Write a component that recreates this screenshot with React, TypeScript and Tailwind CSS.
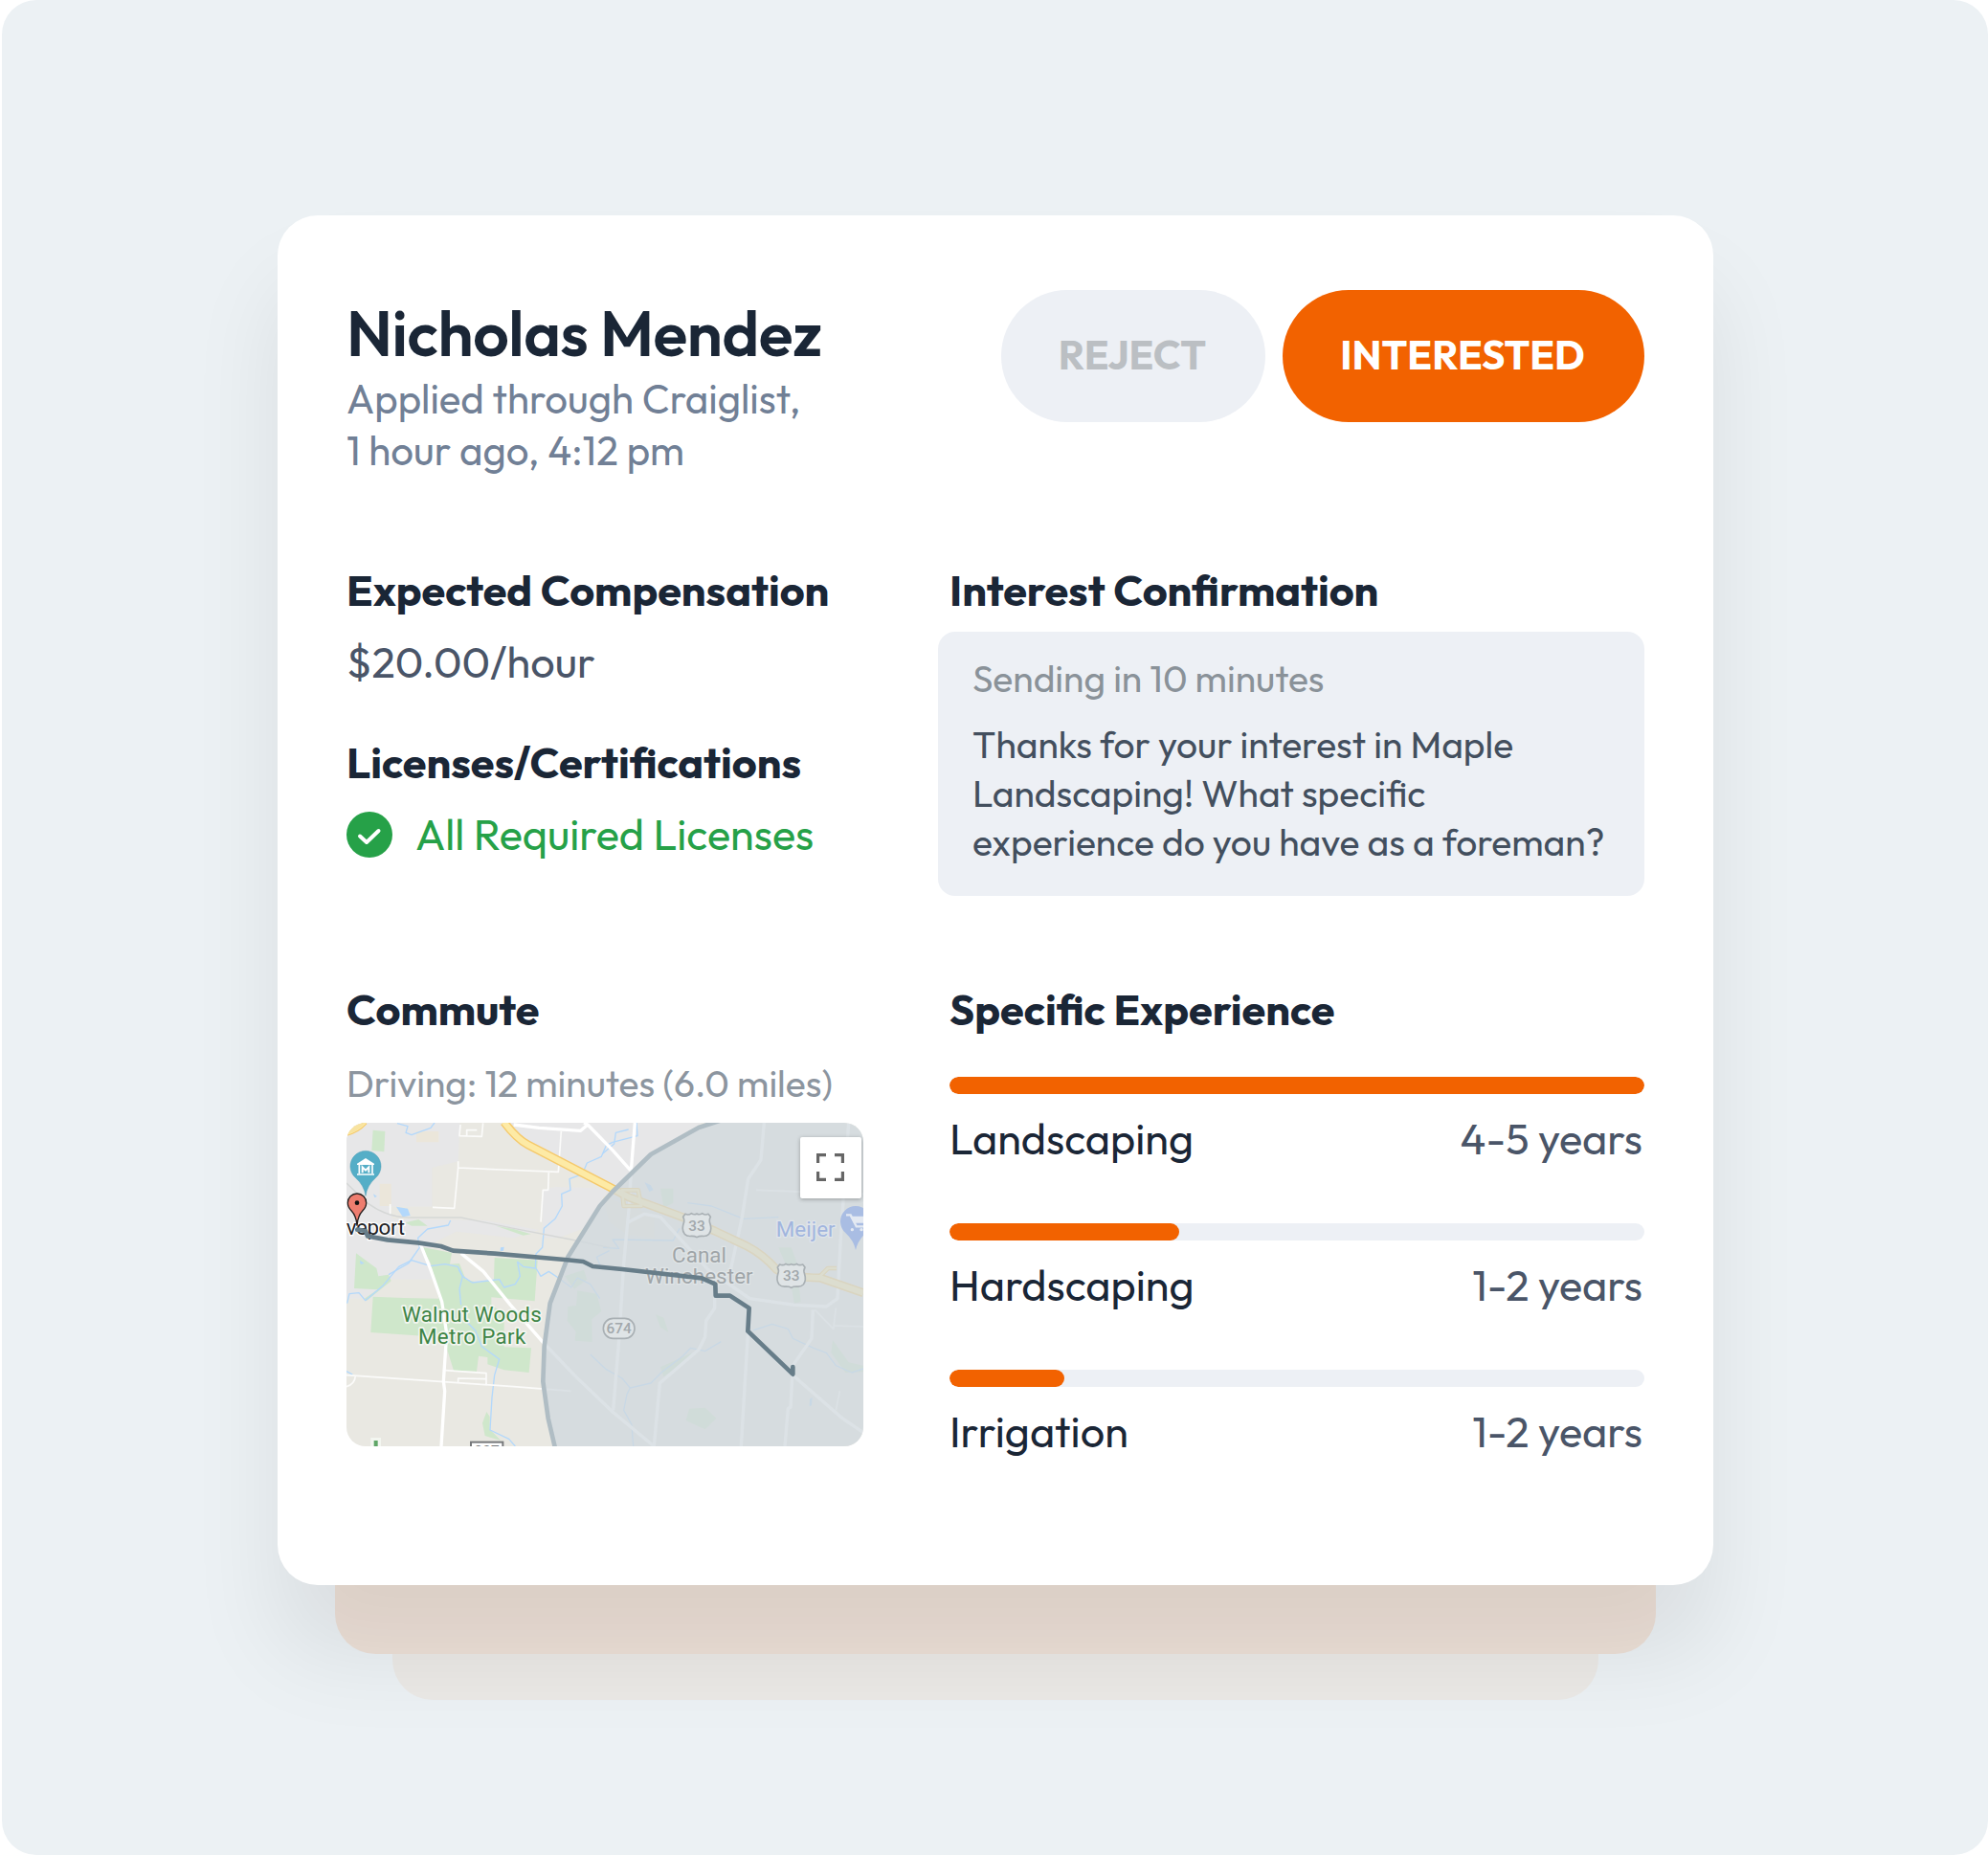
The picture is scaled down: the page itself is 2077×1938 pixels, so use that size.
const experience = [
  { name: 'Landscaping', years: '4-5 years', percent: 100 },
  { name: 'Hardscaping', years: '1-2 years', percent: 33.1 },
  { name: 'Irrigation', years: '1-2 years', percent: 16.5 },
];

function Shield({ x, y }: { x: number; y: number }) {
  return (
    <g transform={`translate(${x} ${y})`}>
      <path
        d="M-36 -37 Q-26 -32 -17 -39 Q-8 -33 0 -38 Q8 -33 17 -39 Q26 -32 36 -37 L43 -28 Q37 -18 42 -6 Q48 14 38 26 Q30 34 16 32 Q6 32 0 36 Q-6 32 -16 32 Q-30 34 -38 26 Q-48 14 -42 -6 Q-37 -18 -43 -28 Z"
        fill="#dfe4e6"
        stroke="#a9b0b4"
        strokeWidth="5"
        strokeLinejoin="round"
      />
      <text x="0" y="15" fontSize="46" fontWeight="500" textAnchor="middle" fill="#a2a8ac">33</text>
    </g>
  );
}

function CommuteMap() {
  return (
    <svg viewBox="36 39 1620 1014" className="block h-[338px] w-[540px] font-['Roboto',sans-serif]">
      <rect x="36" y="39" width="1620" height="1014" fill="#e9e8e2" />

      {/* built-up areas */}
      <g fill="#e7e7e8">
        <path d="M36 39 H392 L386 160 L304 180 V302 H170 L180 340 L470 345 L640 375 L560 400 L380 380 L300 420 L330 530 H170 L120 590 H36 Z" />
        <path d="M530 39 H1150 L990 138 L870 250 L780 210 L700 150 L600 110 Z" />
        <path d="M690 240 L860 245 L780 370 L700 400 H650 V250 Z" />
      </g>
      <path d="M255 66 H325 V100 H255 Z M140 230 H176 V300 H140 Z M840 270 L920 300 L1000 330 V400 L920 390 L860 350 Z" fill="#ebe6da" />

      {/* parks */}
      <g fill="#cfe7cb">
        <path d="M119 62 L157 66 L154 130 L115 126 Z" />
        <path d="M66 448 L130 495 L136 520 L168 515 L176 535 L100 596 L92 590 L134 562 L60 558 Z" />
        <path d="M119 584 L215 588 L325 590 L300 480 L272 428 L366 447 L360 482 L390 480 L410 530 L450 540 L498 530 L500 462 L635 470 L626 598 L490 586 V610 L530 640 V742 L615 745 L608 822 L530 814 L478 796 V774 L450 770 L444 818 L372 816 L350 745 L340 712 L112 696 Z" />
        <path d="M220 352 L262 342 L290 362 L240 362 Z M505 362 L560 372 L614 388 L590 392 Z" />
        <path d="M475 945 L485 960 V1000 L520 1035 L470 1020 L462 980 Z" />
        <path d="M760 565 L820 575 L835 630 L805 655 L806 726 L752 722 L755 694 L728 660 L730 615 L756 612 Z" />
        <path d="M720 520 L780 500 L790 530 L750 560 Z M1020 245 H1060 V290 L1030 305 Z M1390 430 H1430 L1445 470 L1460 600 L1440 605 L1420 500 Z" />
        <path d="M1005 640 L1030 650 L1045 695 L1020 680 Z M1110 935 L1160 932 L1195 965 L1160 1000 L1100 972 Z" />
        <path d="M1020 805 L1120 760 L1100 790 L1030 835 Z M1560 720 L1610 790 L1656 800 V820 L1600 822 L1555 760 Z" />
      </g>

      {/* water */}
      <g fill="none" stroke="#b3d8fb" strokeWidth="4" strokeLinejoin="round">
        <path d="M195 41 L228 50 L222 70 L240 77 L300 55 L312 39" />
        <path d="M870 100 L850 110 L835 145 L790 165 L775 200 L735 215 L738 250 L710 262 L712 300 L690 340 L655 370 L650 430 L630 450 L628 495 L590 490 L572 475 L580 520 L565 545 L530 555 L515 530 L430 540 L400 520 L385 490 L345 482 L300 488 L240 470 L200 490 L150 550 L95 596 L75 572 L45 575 L38 605" />
        <path d="M362 345 L355 360 L290 372 L260 400 L265 430 L230 480 L168 515" />
        <path d="M388 500 L400 520 L390 560 L395 610 M400 650 L440 690 L460 740 L515 780 L500 830 L492 900 L486 1002 L545 1030 L565 1053" />
        <path d="M630 495 L645 520 L670 505 L700 525 L740 555 L760 525 L800 545 L830 590 M860 440 L820 460 L835 495" />
        <path d="M36 818 L55 828 M840 135 L875 105 L880 70 L920 60 M945 39 L948 80 L870 100" />
        <path d="M800 765 L850 812 L900 840 L925 870 L915 890 L905 940 L930 985 L935 1053 M925 870 L990 855 L1025 820 L1090 770 L1115 745 L1160 755 L1210 725" />
        <path d="M1310 690 L1370 670 L1420 685 L1435 715 L1500 745 L1540 760 L1570 800 L1620 822 L1656 810 M1105 290 L1180 300 L1280 340 L1390 335" />
        <path d="M840 430 L890 433 L870 405 L1060 408 L1080 370" />
      </g>
      <path d="M192 302 L228 308 L236 330 L212 334 Z M519 430 L530 428 L528 440 L518 441 Z M120 262 L132 270 L124 273 Z M78 470 L92 480 L80 482 Z M970 225 L990 235 L998 250 L985 255 Z M1488 905 L1496 900 L1494 925 L1487 928 Z" fill="#b3d8fb" />

      {/* railway and minor roads */}
      <path d="M36 228 L100 290 Q170 340 240 336 L395 336 L560 370 L740 405 L860 430" fill="none" stroke="#d5d7d6" strokeWidth="4" />
      <g fill="none" stroke="#fbfbfa" strokeWidth="5" strokeLinejoin="round">
        <path d="M306 304 L374 307 L386 180 L520 186 L700 193 L709 66 M670 194 L668 250 H652 L645 350 M386 180 V160 M173 294 V325" />
        <path d="M393 45 L390 80 L460 82 L464 40 M413 80 V62 H445" />
        <path d="M36 830 L330 850 L560 866 L740 880 M345 815 L474 824 V860 M386 853 V840 L474 842 M36 866 Q62 858 64 832" />
        <path d="M1320 250 L1656 262 M1504 625 L1562 685 L1570 620 M1562 675 L1656 678 M1570 940 L1582 880" />
      </g>

      {/* main roads */}
      <g fill="none" stroke="#ffffff" strokeWidth="10" strokeLinejoin="round">
        <path d="M268 420 L300 500 L335 600 L350 700 L340 850 L344 880 L333 1053" />
        <path d="M395 448 L465 505 L550 610 L650 725 L750 830 L870 945 L1000 1053" />
        <path d="M560 45 L640 55 L770 64 L792 45 L870 125 L926 188 M780 39 L792 45" />
        <path d="M940 39 L928 190 L922 300 L905 480 L890 720 L872 940" />
        <path d="M920 350 L970 325 L1020 335 L1170 500 L1300 590 L1440 610 L1540 615 L1575 590 L1585 400 L1610 39" />
        <path d="M1345 39 L1335 155 L1295 215 L1275 340 L1240 500 L1190 560 V620 L1163 660 L1160 710 L1140 750 L1018 855 L1000 1053" />
        <path d="M1295 690 L1285 850 L1273 1053 M1498 625 L1494 715 L1435 800 L1428 930 L1420 935 L1410 1053 M1435 830 L1590 965 L1656 1010" />
      </g>

      {/* US-33 */}
      <g fill="none" strokeLinejoin="round">
        <path d="M530 37 Q570 90 605 108 L860 240 L920 272 L1090 335 L1190 378 L1290 425 Q1340 450 1385 500 Q1430 525 1520 525 L1656 572" stroke="#f5c96b" strokeWidth="27" />
        <path d="M30 75 Q70 66 95 38 M900 250 H950 L960 300 H905 Z M1520 520 L1545 495 H1572" stroke="#f5c96b" strokeWidth="14" />
        <path d="M530 37 Q570 90 605 108 L860 240 L920 272 L1090 335 L1190 378 L1290 425 Q1340 450 1385 500 Q1430 525 1520 525 L1656 572" stroke="#fdeaa5" strokeWidth="18" />
        <path d="M30 75 Q70 66 95 38 M900 250 H950 L960 300 H905 Z M1520 520 L1545 495 H1572" stroke="#fdeaa5" strokeWidth="8" />
      </g>
      <path d="M36 39 H94 Q75 66 36 76 Z" fill="#f8e3a0" />

      {/* commute radius */}
      <path
        d="M695 1080 L668 965 L652 850 L656 740 L674 605 L730 460 L830 300 L870 255 L990 138 L1140 54 L1220 28 L1700 28 V1080 Z"
        fill="#d0d8dd"
        fillOpacity="0.74"
      />
      <path
        d="M695 1080 L668 965 L652 850 L656 740 L674 605 L730 460 L830 300 L870 255 L990 138 L1140 54 L1220 28"
        fill="none"
        stroke="#b0bdc4"
        strokeWidth="14"
        strokeLinejoin="round"
      />

      {/* labels */}
      <g fontSize="67">
        <g fill="#3d8445" stroke="#f3f6f0" strokeWidth="10" strokeLinejoin="round" paintOrder="stroke">
          <text x="210" y="662" textLength="437">Walnut Woods</text>
          <text x="261" y="731" textLength="337">Metro Park</text>
        </g>
        <text x="35" y="390" textLength="184" fill="#202124" stroke="#ffffff" strokeWidth="8" paintOrder="stroke">veport</text>
        <g fill="#9fa5a8" stroke="#dfe4e6" strokeWidth="8" paintOrder="stroke">
          <text x="1056" y="476" textLength="171">Canal</text>
          <text x="972" y="544" textLength="338">Winchester</text>
        </g>
        <text x="1382" y="396" textLength="186" fill="#a1b5de" stroke="#dfe4ea" strokeWidth="8" paintOrder="stroke">Meijer</text>
      </g>
      <Shield x={1134} y={362} />
      <Shield x={1430} y={520} />
      <rect x="841" y="652" width="98" height="63" rx="31" fill="#dfe4e6" stroke="#a9b0b4" strokeWidth="5" />
      <text x="890" y="700" fontSize="46" fontWeight="500" textAnchor="middle" fill="#a2a8ac">674</text>
      <rect x="426" y="1040" width="100" height="60" fill="#ffffff" stroke="#77797b" strokeWidth="6" />
      <text x="476" y="1082" fontSize="46" fontWeight="500" textAnchor="middle" fill="#77797b">227</text>
      <rect x="112" y="1026" width="32" height="30" fill="#f3f6f0" />
      <rect x="122" y="1035" width="12" height="20" fill="#5fa667" />

      {/* store pin */}
      <path d="M1632 438 Q1626 408 1600 384 A48 48 0 1 1 1664 384 Q1638 408 1632 438 Z" fill="#a9bde3" />
      <g fill="none" stroke="#e3e9f2" strokeWidth="7">
        <path d="M1602 328 H1616 L1634 364 H1656" />
        <path d="M1620 336 H1656 V350 H1628 Z" fill="#e3e9f2" />
      </g>
      <circle cx="1621" cy="374" r="5" fill="#e3e9f2" />
      <circle cx="1650" cy="374" r="5" fill="#e3e9f2" />

      {/* museum pin */}
      <path d="M96 268 Q92 236 64 211 A48 48 0 1 1 128 211 Q100 236 96 268 Z" fill="#55aec7" stroke="#4a9db5" strokeWidth="1.5" />
      <g fill="none" stroke="#ffffff">
        <path d="M69 167 L96 150 L123 167 V171 H69 Z" fill="#ffffff" stroke="none" />
        <path d="M76 170 V199 M117 170 V199" strokeWidth="5" />
        <path d="M69 201 H123" strokeWidth="5" />
        <path d="M86 196 V178 L96 188 L106 178 V196" strokeWidth="6" />
      </g>

      {/* origin pin */}
      <path
        d="M69 362 Q67 330 51 314 Q40 303 40 290 A29 29 0 0 1 98 290 Q98 303 87 314 Q71 330 69 362 Z"
        fill="#ee7d6f"
        stroke="#26201f"
        strokeWidth="4"
      />
      <circle cx="69" cy="290" r="7" fill="#111111" />

      <path
        d="M70 374 L96 378 L102 394 L165 406 L260 415 L332 426 L370 440 L500 449 L720 468 L778 474 L808 489 L900 498 L1150 526 L1192 545 L1193 581 H1238 L1298 620 L1294 692 L1435 827 V804"
        fill="none"
        stroke="#677d89"
        strokeWidth="14"
        strokeLinejoin="round"
        strokeLinecap="round"
      />
    </svg>
  );
}

function SectionTitle({ children }: { children: string }) {
  return <h2 className="text-[45px] leading-[60px] font-bold text-[#1a2636]">{children}</h2>;
}

export default function App() {
  return (
    <div className="h-[1938px] w-[2077px] overflow-hidden bg-white pl-[2px] font-['Outfit','Lato',sans-serif]">
      <div className="h-full rounded-[36px] bg-[#ecf1f4] pt-[225px] pl-72">
        <div className="flex w-[1500px] flex-col items-center">
          <div className="relative z-20 h-[1431px] w-full rounded-[42px] bg-white px-[72px] pt-[78px] shadow-[0_72px_96px_rgba(0,0,0,0.08)]">
            <header className="flex h-[284px] items-start justify-between">
              <div className="pt-[2px]">
                <h1 className="text-[66px] leading-[85px] font-semibold tracking-[-0.43px] text-[#1a2636]">Nicholas Mendez</h1>
                <p className="text-[42px] leading-[54px] text-[#718096]">
                  Applied through Craiglist,
                  <br />1 hour ago, 4:12 pm
                </p>
              </div>
              <div className="flex gap-[18px]">
                <button className="h-[138px] w-[276px] rounded-full bg-[#edf0f5] pr-0.5 pb-1 text-[42px] font-bold text-[#bbbfc3]">
                  REJECT
                </button>
                <button className="h-[138px] w-[378px] rounded-full bg-[#f26200] pr-0.5 pb-1 text-[42px] font-bold text-white">
                  INTERESTED
                </button>
              </div>
            </header>

            <div className="grid grid-cols-[540px_726px] gap-x-[90px]">
              <section className="h-[438px]">
                <SectionTitle>Expected Compensation</SectionTitle>
                <p className="mt-[15px] text-[45px] leading-[60px] text-[#4a5568]">$20.00/hour</p>
                <div className="mt-[45px]">
                  <SectionTitle>Licenses/Certifications</SectionTitle>
                </div>
                <div className="mt-[15px] flex items-center gap-6">
                  <svg viewBox="0 0 48 48" className="size-12">
                    <circle cx="24" cy="24" r="24" fill="#26a148" />
                    <path d="M14 25.5 L21 32 L33.5 20" fill="none" stroke="#fff" strokeWidth="4" strokeLinecap="round" strokeLinejoin="round" />
                  </svg>
                  <span className="text-[45px] leading-[60px] text-[#26a148]">All Required Licenses</span>
                </div>
              </section>

              <section className="h-[438px]">
                <SectionTitle>Interest Confirmation</SectionTitle>
                <div className="mt-[13px] -ml-3 h-[276px] rounded-[18px] bg-[#edf0f5] px-9 pt-[23px] text-[39px] leading-[51px]">
                  <p className="text-[#8a9299]">Sending in 10 minutes</p>
                  <p className="mt-[18px] text-[#434f5e]">
                    Thanks for your interest in Maple
                    <br />
                    Landscaping! What specific
                    <br />
                    experience do you have as a foreman?
                  </p>
                </div>
              </section>

              <section>
                <SectionTitle>Commute</SectionTitle>
                <p className="mt-[21px] text-[39px] leading-[51px] text-[#8c959f]">Driving: 12 minutes (6.0 miles)</p>
                <div className="relative mt-4 overflow-hidden rounded-[20px]">
                  <CommuteMap />
                  <button className="absolute top-[15px] right-[2px] flex size-16 items-center justify-center rounded-[2px] bg-white pr-0.5 pb-0.5 shadow-[0_1px_4px_rgba(0,0,0,0.3)]">
                    <svg viewBox="0 0 29 29" className="size-[29px]">
                      <path d="M1.6 10 V1.6 H10 M19 1.6 H27.4 V10 M27.4 19 V27.4 H19 M10 27.4 H1.6 V19" fill="none" stroke="#666" strokeWidth="3.2" />
                    </svg>
                  </button>
                </div>
              </section>

              <section>
                <SectionTitle>Specific Experience</SectionTitle>
                <div className="mt-10 flex flex-col gap-[58px]">
                  {experience.map((e) => (
                    <div key={e.name}>
                      <div className="h-[18px] overflow-hidden rounded-full bg-[#edf0f5]">
                        <div className="h-full rounded-full bg-[#f26200]" style={{ width: `${e.percent}%` }} />
                      </div>
                      <div className="mt-[17px] flex justify-between pr-[2px] text-[45px] leading-[60px]">
                        <span className="text-[#1a2636]">{e.name}</span>
                        <span className="text-[#4a5568]">{e.years}</span>
                      </div>
                    </div>
                  ))}
                </div>
              </section>
            </div>
          </div>

          {/* stacked cards peeking out underneath */}
          <div className="relative z-10 -mt-[48px] h-[120px] w-[1380px] rounded-b-[42px] bg-[#ede0d7]" />
          <div className="-mt-[48px] h-[96px] w-[1260px] rounded-b-[42px] bg-[#ebe9e6]" />
        </div>
      </div>
    </div>
  );
}
